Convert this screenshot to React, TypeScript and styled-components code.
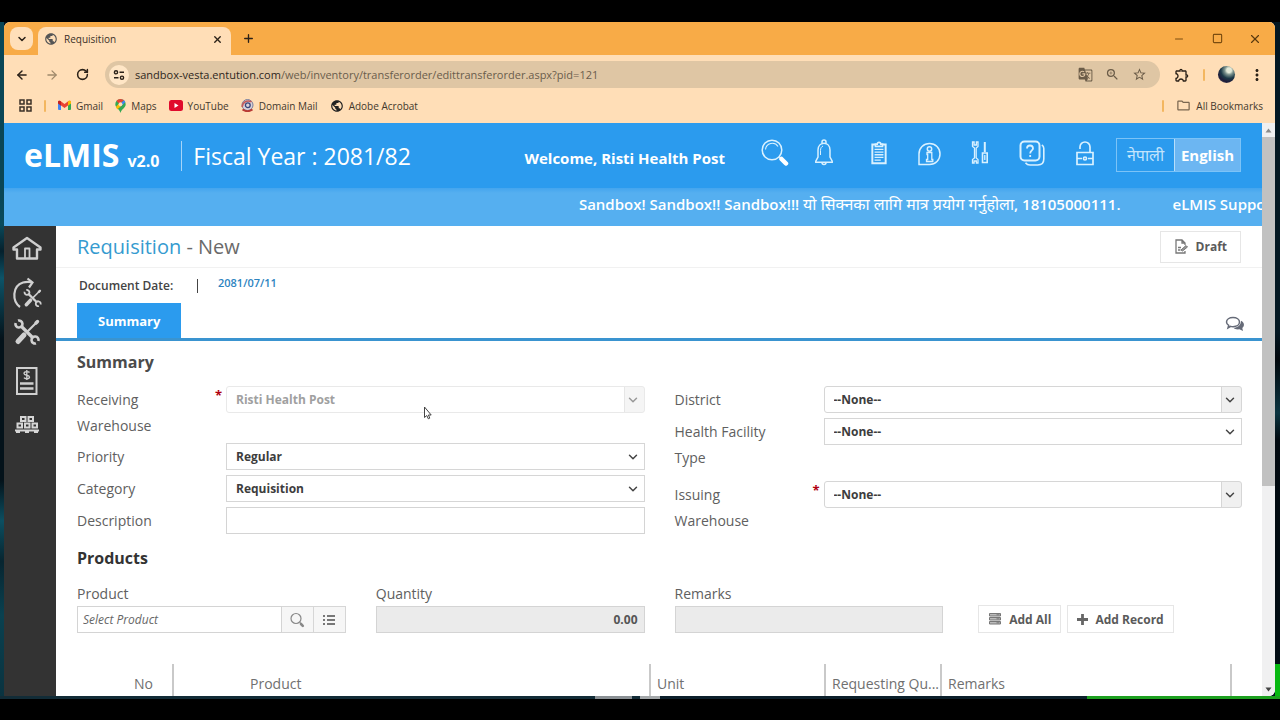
import React from 'react';
import styled, { createGlobalStyle, css } from 'styled-components';
import { ArrowLeft, ArrowRight, ChevronDown, Minus, Plus, RotateCw, Square, X } from 'lucide-react';
import { MdGTranslate, MdMoreVert, MdOutlineExtension, MdOutlineFolder, MdPublic, MdStarBorder, MdZoomIn } from 'react-icons/md';

const sans = `'Open Sans', 'Noto Sans', sans-serif`;
const blue = '#2b9bee';

const GlobalStyle = createGlobalStyle`
  *, *::before, *::after { box-sizing: border-box; }
  body { margin: 0; background: #000; font-family: ${sans}; }
  button, input, select { font-family: inherit; margin: 0; }
  button { cursor: pointer; }
  h1, h2, ul { margin: 0; padding: 0; }
  svg { display: block; flex: none; }
`;

/* ---------- desktop and window ---------- */

const Screen = styled.div`
  height: 100vh;
  display: flex;
  flex-direction: column;
  padding: 22px 0 21px;
  background: #000;
  overflow: hidden;
`;

const Desktop = styled.div`
  flex: 1;
  min-height: 0;
  display: grid;
  grid-template-columns: 4px minmax(0, 1fr) 5px;
  background: #04141d;
`;

const LeftWallpaper = styled.div`
  background: linear-gradient(#0a4656 0 26%, #0a4a5c 30%, #05202c 34%, #0d5468 38%, #04121a 47%, #04121a 68%, #0c4f61 74%, #072530 80%, #0a4150 88%, #0a3340);
`;

const RightWallpaper = styled.div`
  background: linear-gradient(#031722 0 46%, #01070c 50%, #0b3440 58%, #020a10 62%, #020d14 95.3%, #08b812 95.3%);
`;

const Window = styled.div`
  min-width: 0;
  min-height: 0;
  display: flex;
  flex-direction: column;
  border-radius: 6px 6px 6px 0;
  overflow: hidden;
  background: #fff;
`;

const Taskbar = styled.div`
  flex: none;
  height: 3px;
  display: grid;
  grid-template-columns: 595fr 37fr 8fr 20fr 427fr 193fr;
  background: #122c37;
`;

const TaskPart = styled.span<{ $color: string }>`
  background: ${p => p.$color};
`;

/* ---------- browser chrome ---------- */

const TabStrip = styled.div`
  flex: none;
  height: 33px;
  display: flex;
  align-items: flex-end;
  padding-left: 6px;
  background: #f8ab47;
`;

const PlainButton = styled.button<{ $color?: string }>`
  display: flex;
  align-items: center;
  justify-content: center;
  padding: 0;
  border: 0;
  background: none;
  color: ${p => p.$color ?? '#2b2118'};
`;

const TabSearch = styled(PlainButton)`
  width: 23px;
  height: 23px;
  margin-bottom: 5px;
  border-radius: 8px;
  background: #ffdfb9;
`;

const BrowserTab = styled.div`
  width: 193px;
  height: 28px;
  display: flex;
  align-items: center;
  gap: 6px;
  margin-left: 5px;
  padding: 0 8px 4px 6px;
  border-radius: 8px 8px 0 0;
  background: #ffdeb7;
  color: #3b3027;
  font-size: 10px;
`;

const TabTitle = styled.span`
  flex: 1;
`;

const NewTab = styled(PlainButton)`
  width: 34px;
  height: 33px;
`;

const WindowButtons = styled.div`
  display: flex;
  margin-left: auto;
  padding-right: 1px;
`;

const WindowButton = styled(PlainButton)`
  width: 38px;
  height: 33px;
`;

const Toolbar = styled.div`
  flex: none;
  height: 39px;
  display: flex;
  align-items: center;
  padding: 0 9px 0 3px;
  background: #ffdeb7;
`;

const ToolButton = styled(PlainButton)`
  width: 30px;
  height: 28px;
`;

const Omnibox = styled.div`
  flex: 1;
  min-width: 0;
  height: 27px;
  display: flex;
  align-items: center;
  gap: 12px;
  margin: 0 7px 0 8px;
  padding: 0 13px 0 4px;
  border-radius: 14px;
  background: #dfc6a4;
`;

const SiteInfo = styled(PlainButton)`
  width: 20px;
  height: 20px;
  border-radius: 50%;
  background: #ffe6c6;
`;

const Url = styled.span`
  flex: 1;
  margin-left: -6px;
  overflow: hidden;
  white-space: nowrap;
  color: #6a5d4c;
  font-size: 11px;
`;

const Host = styled.span`
  color: #2e261d;
`;

const Bar = styled.span`
  width: 2px;
  height: 12px;
  border-radius: 1px;
  background: #f3b65f;
`;

const ToolSep = styled(Bar)`
  margin-left: 6px;
`;

const Avatar = styled.span`
  width: 17px;
  height: 17px;
  margin: 0 13px;
  border-radius: 50%;
  background: radial-gradient(circle at 65% 25%, #e3e9d8 0 14%, #7f958f 26%, #1d3a48 48%, #1f1b3a 70%, #7d8c76);
`;

const Bookmarks = styled.nav`
  flex: none;
  height: 29px;
  display: flex;
  align-items: center;
  padding: 0 12px 6px 15px;
  background: #ffdeb7;
`;

const BookmarkSep = styled(Bar)`
  margin: 0 12px;
`;

const Bookmark = styled.a`
  display: flex;
  align-items: center;
  gap: 5px;
  margin-right: 12px;
  color: #44382c;
  font-size: 10px;
  text-decoration: none;
  white-space: nowrap;
  &:last-child { margin-right: 0; }
`;

const Push = styled.span`
  flex: 1;
`;

/* ---------- page frame ---------- */

const Viewport = styled.div`
  flex: 1;
  min-height: 0;
  display: grid;
  grid-template-columns: minmax(0, 1fr) 13px;
`;

const Page = styled.div`
  min-height: 0;
  overflow: hidden;
  display: flex;
  flex-direction: column;
`;

const Scrollbar = styled.div`
  display: flex;
  flex-direction: column;
  align-items: stretch;
  background: #f0f0f1;
`;

const ScrollArrow = styled(PlainButton)`
  height: 14px;
`;

const Thumb = styled.div`
  flex: 350;
  background: #c1c1c1;
`;

const ThumbRest = styled.div`
  flex: 196;
`;

const Header = styled.header`
  flex: none;
  height: 65px;
  display: flex;
  align-items: center;
  padding: 0 21px 0 20px;
  background: ${blue};
  color: #fff;
`;

const Logo = styled.div`
  display: flex;
  align-items: baseline;
  gap: 8px;
  padding-top: 4px;
  font-size: 32px;
  line-height: 40px;
  font-weight: 700;
`;

const Version = styled.span`
  font-size: 16px;
`;

const Fiscal = styled.div`
  margin-left: 22px;
  padding-left: 11px;
  border-left: 1px solid #a5d4f8;
  font-size: 23px;
  line-height: 30px;
  white-space: nowrap;
`;

const Welcome = styled.div`
  margin-left: auto;
  padding-top: 5px;
  font-size: 15px;
  font-weight: 700;
  white-space: nowrap;
`;

const HeaderGroup = styled.div<{ $gap: number; $before: number }>`
  display: flex;
  align-items: center;
  gap: ${p => p.$gap}px;
  margin-left: ${p => p.$before}px;
  padding-bottom: 5px;
`;

const Language = styled.div`
  display: grid;
  grid-template-columns: 57px 66px;
  margin-left: 21px;
  margin-bottom: 2px;
  border: 1px solid #7cc3f7;
`;

const LangButton = styled.button<{ $active?: boolean }>`
  height: 32px;
  padding: 0;
  border: 0;
  background: none;
  color: #c3e4fc;
  font-size: 16px;
  ${p => p.$active && css`
    border-left: 1px solid #b7defb;
    background: #6cb6f2;
    color: #fff;
    font-size: 15px;
    font-weight: 700;
  `}
`;

const Ticker = styled.div`
  flex: none;
  height: 38px;
  display: flex;
  align-items: center;
  gap: 52px;
  padding: 0 0 6px 45.7%;
  overflow: hidden;
  background: linear-gradient(#44a5ee, #55aff0 5px);
  color: #fff;
  font-size: 15px;
  line-height: 22px;
  font-weight: 600;
  white-space: nowrap;
`;

const Notice = styled.span`
  font-size: 16px;
  font-weight: 400;
`;

const Body = styled.div`
  flex: 1;
  min-height: 0;
  display: grid;
  grid-template-columns: 52px minmax(0, 1fr);
`;

const Sidebar = styled.nav`
  display: flex;
  flex-direction: column;
  align-items: center;
  padding-right: 7px;
  background: #333;
`;

const SideButton = styled(PlainButton)`
  width: 45px;
  height: 44px;
`;

const Main = styled.main`
  min-width: 0;
  background: #fff;
  color: #555;
`;

/* ---------- title and tabs ---------- */

const TitleRow = styled.div`
  display: flex;
  align-items: center;
  justify-content: space-between;
  height: 42px;
  padding: 0 21px;
  border-bottom: 1px solid #f1f1f1;
`;

const Title = styled.h1`
  color: #6a6a6a;
  font-size: 20px;
  font-weight: 400;
`;

const TitleName = styled.span`
  color: #359bd0;
`;

const OutlineButton = styled.button<{ $tall?: boolean }>`
  display: flex;
  align-items: center;
  gap: 7px;
  height: ${p => (p.$tall ? 32 : 28)}px;
  padding: 0 ${p => (p.$tall ? 13 : 9)}px;
  border: 1px solid #e6e6e6;
  background: #fff;
  color: #5a5a5a;
  font-size: 12px;
  font-weight: 700;
  white-space: nowrap;
`;

const DateRow = styled.div`
  display: flex;
  align-items: center;
  height: 35px;
  padding: 0 23px;
  color: #444;
  font-size: 12px;
`;

const DateLabel = styled.span`
  width: 118px;
  font-weight: 600;
`;

const DateValue = styled.a`
  margin-left: 20px;
  padding-bottom: 6px;
  color: #2d84bf;
  font-size: 11px;
  font-weight: 600;
  text-decoration: none;
`;

const DateBar = styled.span`
  width: 1px;
  height: 14px;
  background: #444;
`;

const Tabs = styled.div`
  display: flex;
  align-items: center;
  justify-content: space-between;
  padding: 0 17px 0 21px;
  border-bottom: 3px solid #3a94d0;
`;

const PageTab = styled.button`
  height: 35px;
  padding: 0 21px;
  border: 0;
  background: ${blue};
  color: #fff;
  font-size: 13px;
  font-weight: 700;
`;

const CommentsButton = styled(PlainButton)`
  padding-top: 6px;
`;

/* ---------- form ---------- */

const Section = styled.section`
  padding: 0 20px 0 21px;
`;

const SectionTitle = styled.h2<{ $dark?: boolean }>`
  padding: ${p => (p.$dark ? 13 : 10)}px 0 13px;
  color: ${p => (p.$dark ? '#333' : '#4b4b4b')};
  font-size: 16px;
  line-height: 22px;
  font-weight: 700;
`;

const FormGrid = styled.form`
  display: grid;
  grid-template-columns: 1fr 1fr;
  gap: 30px;
`;

const Column = styled.div`
  display: flex;
  flex-direction: column;
  gap: 5px;
`;

const Row = styled.div<{ $loose?: boolean }>`
  display: grid;
  grid-template-columns: 149px minmax(0, 1fr);
  align-items: start;
  padding-bottom: ${p => (p.$loose ? 6 : 0)}px;
`;

const LabelCell = styled.div`
  display: flex;
  justify-content: space-between;
  padding-right: 4px;
`;

const Label = styled.label`
  max-width: 110px;
  color: #606060;
  font-size: 14px;
  line-height: 26px;
  padding-top: 1px;
  margin-bottom: -1px;
`;

const Required = styled.span`
  color: #b00010;
  font-size: 13px;
  line-height: 18px;
  font-weight: 700;
`;

const Field = styled.div`
  position: relative;
  display: grid;
  align-items: center;
  height: 27px;
  > * { grid-area: 1 / 1; }
`;

const Select = styled.select<{ $combo?: boolean }>`
  width: 100%;
  height: 27px;
  padding: 0 30px 0 9px;
  appearance: none;
  border: 1px solid #d6d6d6;
  border-radius: ${p => (p.$combo ? 3 : 0)}px;
  background: ${p => (p.$combo ? 'linear-gradient(to left, #f0f0f0 19px, #d6d6d6 19px, #d6d6d6 20px, #fff 20px)' : '#fff')};
  color: #3d3d3d;
  font-size: 12px;
  font-weight: 700;
  &:disabled {
    opacity: 1;
    border-color: #e9e9e9;
    color: #a0a0a0;
    background: linear-gradient(to left, #f5f5f5 19px, #e6e6e6 19px, #e6e6e6 20px, #fff 20px);
  }
`;

const Caret = styled.span<{ $muted?: boolean }>`
  justify-self: end;
  padding-right: 5px;
  color: ${p => (p.$muted ? '#999' : '#444')};
  pointer-events: none;
`;

const TextInput = styled.input<{ $grey?: boolean }>`
  width: 100%;
  height: 27px;
  padding: 0 6px 0 5px;
  border: 1px solid #d4d4d4;
  border-radius: 0;
  background: ${p => (p.$grey ? '#ebebeb' : '#fff')};
  color: #555;
  font-size: 12px;
  text-align: ${p => (p.$grey ? 'right' : 'left')};
  font-weight: ${p => (p.$grey ? 700 : 400)};
  &::placeholder { color: #666; font-style: italic; opacity: 1; }
`;

const Pointer = styled.svg`
  position: absolute;
  left: 47%;
  top: 20px;
`;

const ProductGrid = styled.form`
  display: grid;
  grid-template-columns: repeat(4, minmax(0, 1fr));
  column-gap: 30px;
  align-items: end;
`;

const Stack = styled.div`
  display: flex;
  flex-direction: column;
`;

const StackLabel = styled.label`
  color: #606060;
  font-size: 14px;
  line-height: 24px;
`;

const InputGroup = styled.div`
  display: grid;
  grid-template-columns: minmax(0, 1fr) 32px 32px;
  height: 27px;
`;

const AddonButton = styled(PlainButton)`
  border: 1px solid #d6d6d6;
  border-left: 0;
  background: #f6f6f6;
`;

const Actions = styled.div`
  display: flex;
  gap: 6px;
  padding-left: 5px;
`;

const Table = styled.table`
  width: 100%;
  margin-top: 31px;
  table-layout: fixed;
  border-collapse: collapse;
`;

const Th = styled.th<{ $width?: number; $indent?: number; $right?: boolean }>`
  width: ${p => (p.$width ? `${p.$width}px` : 'auto')};
  height: 39px;
  padding: 0 ${p => (p.$right ? 19 : 0)}px 0 ${p => p.$indent ?? 6}px;
  overflow: hidden;
  border-right: 2px solid #c9c9c9;
  color: #707070;
  font-size: 14px;
  font-weight: 400;
  text-align: ${p => (p.$right ? 'right' : 'left')};
  white-space: nowrap;
`;

const EdgeCell = styled.td`
  width: 11px;
  padding: 0;
`;

/* ---------- drawings ---------- */

const SiteInfoIcon = () => (
  <svg width="12" height="12" viewBox="0 0 12 12" fill="none" stroke="#2b2118" strokeWidth="1.4">
    <circle cx="3" cy="3.3" r="1.6" /><path d="M6.5 3.3H11M1 8.7h4.5" /><circle cx="9" cy="8.7" r="1.6" />
  </svg>
);

const AppsIcon = () => (
  <svg width="13" height="13" viewBox="0 0 13 13" fill="none" stroke="#3b3027" strokeWidth="1.5">
    <path d="M1 1h4v4H1zM8 1h4v4H8zM1 8h4v4H1zM8 8h4v4H8z" />
  </svg>
);

const GmailIcon = () => (
  <svg width="13" height="11" viewBox="0 0 13 11">
    <path fill="#4285f4" d="M0 2v7a1 1 0 0 0 1 1h2V4z" />
    <path fill="#34a853" d="M10 4v6h2a1 1 0 0 0 1-1V2z" />
    <path fill="#ea4335" d="M0 2.2C0 .6 1.6.3 2.5 1l4 3.1 4-3.1c.9-.7 2.5-.4 2.5 1.200L10 5v.6L6.500 8 3 5.400V4.500z" />
    <path fill="#c5221f" d="M0 2v1.500l3 2.200V1.400C1.800.3 0 .6 0 2z" />
    <path fill="#fbbc04" d="M10 1.400v4.300l3-2.200V2c0-1.400-1.800-1.700-3-.6z" />
  </svg>
);

const MapsIcon = () => (
  <svg width="11" height="14" viewBox="0 0 11 14">
    <path fill="#34a853" d="M5.500 0A5.200 5.200 0 0 0 .3 5.200C.3 9 4.300 9.500 5.500 14c1.200-4.500 5.200-5 5.200-8.800A5.200 5.200 0 0 0 5.500 0z" />
    <path fill="#4285f4" d="M5.500 0c2.200 0 4 1.200 4.800 3L5.500 8 3.600 6.400 9 .9z" />
    <path fill="#ea4335" d="M5.500 0 9 1 4.500 5 1.500 2C2.300.9 3.800 0 5.500 0z" />
    <path fill="#fbbc04" d="M1 7.800 4.500 4l2.300 2.400-4.600 4C1.700 9.500 1.300 8.800 1 7.800z" />
    <circle cx="5.500" cy="5.200" r="1.900" fill="#ffdeb7" />
  </svg>
);

const YouTubeIcon = () => (
  <svg width="14" height="11" viewBox="0 0 14 11">
    <rect width="14" height="11" rx="2.500" fill="#e00b2d" /><path d="M5.500 3v5l4-2.500z" fill="#fff" />
  </svg>
);

const MailIcon = () => (
  <svg width="13" height="13" viewBox="0 0 13 13" fill="none">
    <circle cx="6.500" cy="6" r="5.500" fill="#d9d0d8" stroke="#7a7f9c" />
    <path d="M1.200 8C1.500 3 6 .8 10.500 2.800" stroke="#c45a5a" strokeWidth="1.600" />
    <circle cx="6.800" cy="6.200" r="2.400" stroke="#39457a" strokeWidth="1.300" />
    <path d="M1.500 10.500c3 2 7 2 10 0" stroke="#b93a34" strokeWidth="2" />
  </svg>
);

const line = { fill: 'none', stroke: '#d9f1ff', strokeWidth: 1.5 };

const SearchIcon = () => (
  <svg width="28" height="28" viewBox="0 0 28 28" {...line}>
    <circle cx="11" cy="11" r="9.800" /><path d="M4.500 10.500A6.800 6.800 0 0 1 17 7.500" strokeWidth="1.100" />
    <path d="m18 17.500 2.500 2.500" /><path d="m20.500 20 4.500 4.500" stroke="#fff" strokeWidth="4.500" strokeLinecap="round" />
  </svg>
);

const BellIcon = () => (
  <svg width="18" height="28" viewBox="0 0 18 28" {...line}>
    <path d="M7 4.500V3a2 2 0 0 1 4 0v1.500M3 18v-7c0-9 12-9 12 0v7l2.200 4.200v1H.8v-1zM7 23.500a2 2 0 0 0 4 0" />
    <path d="M5.500 16v-4.500c0-2.500 1-3.800 2.500-4.500" strokeWidth="1" />
  </svg>
);

const ClipboardIcon = () => (
  <svg width="16" height="26" viewBox="0 0 18 28" {...line}>
    <path d="M5 4.500H1.500v21h15v-21H13" strokeWidth="2.200" /><path d="M5 6.500V4h2a2 2 0 0 1 4 0h2v2.500z" strokeWidth="1.800" />
    <path d="M4 10h10M4 13h10M4 16h10M4 19h10M4 22h7" strokeWidth="1.500" />
  </svg>
);

const InfoIcon = () => (
  <svg width="24" height="26" viewBox="0 0 24 26" {...line}>
    <path d="M2 24.500V14C2 8 6.500 3.500 12.500 3.500S23 8 23 14s-4.500 10.500-10.500 10.500z" />
    <circle cx="12.500" cy="9" r="2.200" /><path d="M10 12.500h4.800v7h1v2H9.500v-2h1.200v-5H10z" strokeWidth="1.300" />
  </svg>
);

const ToolsIcon = () => (
  <svg width="18" height="26" viewBox="0 0 18 26" {...line} strokeWidth={1.3}>
    <path d="M1.500 2v4.500l2 1.500v10l-2 1.500V23h1.600v-2h2.300v2H7v-3.500L5.200 18V8L7 6.500V2H5.400v3H3.100V2z" />
    <path d="M13.800 2v10" strokeWidth="2" /><path d="M11.500 13h4.700v9.500h-4.700z" strokeWidth="1.600" /><path d="M13.800 15v5" />
  </svg>
);

const HelpIcon = () => (
  <svg width="26" height="28" viewBox="0 0 26 28" {...line} strokeWidth={1.6}>
    <rect x="1.500" y="2.500" width="19" height="19" rx="4" strokeWidth="2" />
    <path d="M22.800 6c1.500.8 2 2 2 3.500V20c0 4-2 6-6 6H11c-2 0-3.500-.8-4.500-2.200" />
    <path d="M8 9.500c0-4 6-4 6 0 0 2-2.800 2-2.800 5M11.200 16v2" strokeWidth="1.800" />
  </svg>
);

const LockIcon = () => (
  <svg width="20" height="28" viewBox="0 0 20 28" {...line} strokeWidth={1.7}>
    <path d="M5 10V8a5 5 0 0 1 10 0v5.500M2 13.500h16v12H2z" /><path d="M2 19.500h5M13 19.500h5" /><circle cx="10" cy="19.500" r="1.500" />
  </svg>
);

const HomeIcon = () => (
  <svg width="32" height="44" viewBox="0 0 32 44" fill="none" stroke="#cfcfcf" strokeWidth="2.400" strokeLinejoin="round">
    <path d="M2.500 21.500 16 12l13.500 9.500v2H26v9H6v-9H2.500z" /><path d="M14 32V22.500h4.500V32" strokeWidth="1.800" />
  </svg>
);

const toolsCross = (
  <>
    <path d="M7 7l12 12" strokeWidth="3.200" />
    <path d="M1.600 4A3.500 3.500 0 1 0 4 1.600M24.400 22A3.500 3.500 0 1 0 22 24.400" strokeWidth="2.600" />
    <path d="M23.500 2.500 13 13" strokeWidth="2.200" /><path d="m22 4 1.500-1.500" strokeWidth="3.400" strokeLinecap="round" />
    <path d="m10 16-6 6.500" strokeWidth="5" strokeLinecap="round" />
  </>
);

const CycleIcon = () => (
  <svg width="32" height="44" viewBox="0 0 32 44" fill="none" stroke="#d0d0d0" strokeWidth="2.200">
    <path d="M9 37C1 31 1 16 12 12.500c3-.9 6-.8 9-.3" /><path d="m16.500 8.500 5 4-3.500 5" />
    <g transform="translate(12.500 19) scale(.7)">{toolsCross}</g>
  </svg>
);

const RepairIcon = () => (
  <svg width="32" height="44" viewBox="0 0 32 44" fill="none" stroke="#d0d0d0">
    <g transform="translate(3 5)">{toolsCross}</g>
  </svg>
);

const InvoiceIcon = () => (
  <svg width="32" height="44" viewBox="0 0 32 44" fill="none" stroke="#d0d0d0" strokeWidth="2">
    <path d="M6 10h19.500v26H6z" /><path d="M9 25.500h13.500M9 30.500h13.500" strokeWidth="2.400" />
    <path d="M18.500 14.500c-1-1.300-5.500-1.200-5.500 1 0 2.300 5.500 1.200 5.500 3.500 0 2.200-4.500 2.200-5.500.7M15.800 12v10" strokeWidth="1.300" />
  </svg>
);

const PalletIcon = () => (
  <svg width="32" height="44" viewBox="0 0 32 44" fill="none" stroke="#d6d6d6" strokeWidth="2">
    <path d="M10 15h4.500v4H10zM17.500 15H22v4h-4.500zM6.500 21.500H11v4H6.500zM14 21.500h4.500v4H14zM21.500 21.500H26v4h-4.500z" />
    <path d="M4 28.500h24" /><path d="M5 30h4M14 30h4M23 30h4" />
  </svg>
);

const DraftIcon = () => (
  <svg width="15" height="15" viewBox="0 0 15 15" fill="none" stroke="#777" strokeWidth="1.300">
    <path d="M11 12v2H2V1h6l3 3v2M8 1v3h3M4 8.500h3M4 11h2.500" /><path d="m7 11 5-4.500 1.500 1.500-5 4z" fill="#999" strokeWidth="1" />
  </svg>
);

const ChatIcon = () => (
  <svg width="20" height="16" viewBox="0 0 20 16">
    <path d="M8 1.500c3.700 0 6.500 2 6.500 4.600S11.700 10.700 8 10.700c-.8 0-1.600-.1-2.300-.3L3 12l.7-2.600C2.300 8.600 1.500 7.400 1.500 6.100 1.500 3.500 4.300 1.500 8 1.500z" fill="none" stroke="#666b78" strokeWidth="1.500" />
    <path d="M16 4.800c4 2 3.500 5.700 1.300 7.200L18 15l-3.500-1.700c-3 .3-5-.3-6-1.500 4 0 7.500-2.500 7.500-7z" fill="#666b78" />
  </svg>
);

const FindIcon = () => (
  <svg width="16" height="16" viewBox="0 0 16 16" fill="none" stroke="#888" strokeWidth="1.200">
    <circle cx="7" cy="6.500" r="5" /><path d="m10.800 10.500 1.200 1.200" /><path d="m12 12 1.800 1.800" strokeWidth="2.600" strokeLinecap="round" />
  </svg>
);

const ListIcon = () => (
  <svg width="14" height="12" viewBox="0 0 14 12" stroke="#777" strokeWidth="2">
    <path d="M1 2h2M5 2h8M1 6h2M5 6h8M1 10h2M5 10h8" />
  </svg>
);

const StackIcon = () => (
  <svg width="14" height="12" viewBox="0 0 14 12" fill="none" stroke="#777" strokeWidth="1">
    <path d="M1.500.5h11v2.500h-11zM1.500 4.500h11V7h-11zM1.500 8.500h11V11h-11z" fill="#bbb" /><path d="M8.500 1.800h3M8.500 5.800h3M8.500 9.800h3" />
  </svg>
);

const PlusIcon = () => (
  <svg width="11" height="11" viewBox="0 0 11 11" stroke="#666" strokeWidth="2.800"><path d="M5.500 0v11M0 5.500h11" /></svg>
);

const Triangle = ({ down }: { down?: boolean }) => (
  <svg width="7" height="5" viewBox="0 0 7 5" fill={down ? '#444' : '#8a8a8a'}><path d={down ? 'M.5.5h6l-3 4z' : 'M.5 4.500h6l-3-4z'} /></svg>
);

/* ---------- composed parts ---------- */

type PickerProps = { id: string; label: string; value: string; required?: boolean; combo?: boolean; disabled?: boolean; loose?: boolean; children?: React.ReactNode };

const Picker = ({ id, label, value, required, combo, disabled, loose, children }: PickerProps) => (
  <Row $loose={loose}>
    <LabelCell>
      <Label htmlFor={id}>{label}</Label>
      {required && <Required>*</Required>}
    </LabelCell>
    <Field>
      <Select id={id} $combo={combo} disabled={disabled} defaultValue={value}>
        <option>{value}</option>
      </Select>
      <Caret $muted={disabled}><ChevronDown size={14} strokeWidth={2.5} /></Caret>
      {children}
    </Field>
  </Row>
);

const Chrome = () => (
  <>
    <TabStrip>
      <TabSearch aria-label="Search tabs"><ChevronDown size={12} strokeWidth={3} /></TabSearch>
      <BrowserTab>
        <MdPublic size={14} color="#555" />
        <TabTitle>Requisition</TabTitle>
        <PlainButton aria-label="Close tab"><X size={11} strokeWidth={3} /></PlainButton>
      </BrowserTab>
      <NewTab aria-label="New tab"><Plus size={13} strokeWidth={2.5} /></NewTab>
      <WindowButtons>
        <WindowButton aria-label="Minimize" $color="#7a4c10"><Minus size={12} /></WindowButton>
        <WindowButton aria-label="Maximize" $color="#7a4c10"><Square size={11} strokeWidth={2.5} /></WindowButton>
        <WindowButton aria-label="Close" $color="#5a3a10"><X size={14} strokeWidth={2} /></WindowButton>
      </WindowButtons>
    </TabStrip>
    <Toolbar>
      <ToolButton aria-label="Back"><ArrowLeft size={14} strokeWidth={2.5} /></ToolButton>
      <ToolButton aria-label="Forward" $color="#a08a6c"><ArrowRight size={14} strokeWidth={2.2} /></ToolButton>
      <ToolButton aria-label="Reload"><RotateCw size={13} strokeWidth={2.8} /></ToolButton>
      <Omnibox>
        <SiteInfo aria-label="Site information"><SiteInfoIcon /></SiteInfo>
        <Url><Host>sandbox-vesta.entution.com</Host>/web/inventory/transferorder/edittransferorder.aspx?pid=121</Url>
        <PlainButton aria-label="Translate" $color="#6b5c48"><MdGTranslate size={15} /></PlainButton>
        <PlainButton aria-label="Zoom" $color="#6b5c48"><MdZoomIn size={15} /></PlainButton>
        <PlainButton aria-label="Bookmark" $color="#6b5c48"><MdStarBorder size={15} /></PlainButton>
      </Omnibox>
      <ToolButton aria-label="Extensions"><MdOutlineExtension size={16} /></ToolButton>
      <ToolSep />
      <Avatar />
      <PlainButton aria-label="Menu"><MdMoreVert size={18} /></PlainButton>
    </Toolbar>
    <Bookmarks>
      <AppsIcon />
      <BookmarkSep />
      <Bookmark href="#"><GmailIcon />Gmail</Bookmark>
      <Bookmark href="#"><MapsIcon />Maps</Bookmark>
      <Bookmark href="#"><YouTubeIcon />YouTube</Bookmark>
      <Bookmark href="#"><MailIcon />Domain Mail</Bookmark>
      <Bookmark href="#"><MdPublic size={14} color="#222" />Adobe Acrobat</Bookmark>
      <Push />
      <BookmarkSep />
      <Bookmark href="#"><MdOutlineFolder size={15} color="#7a6750" />All Bookmarks</Bookmark>
    </Bookmarks>
  </>
);

export default function App() {
  return (
    <Screen>
      <GlobalStyle />
      <Desktop>
        <LeftWallpaper />
        <Window>
          <Chrome />
          <Viewport>
            <Page>
              <Header>
                <Logo>eLMIS <Version>v2.0</Version></Logo>
                <Fiscal>Fiscal Year : 2081/82</Fiscal>
                <Welcome>Welcome, Risti Health Post</Welcome>
                <HeaderGroup $gap={26} $before={36}>
                  <PlainButton aria-label="Search"><SearchIcon /></PlainButton>
                  <PlainButton aria-label="Notifications"><BellIcon /></PlainButton>
                </HeaderGroup>
                <HeaderGroup $gap={30} $before={38}>
                  <PlainButton aria-label="Reports"><ClipboardIcon /></PlainButton>
                  <PlainButton aria-label="Information"><InfoIcon /></PlainButton>
                  <PlainButton aria-label="Settings"><ToolsIcon /></PlainButton>
                  <PlainButton aria-label="Help"><HelpIcon /></PlainButton>
                  <PlainButton aria-label="Log out"><LockIcon /></PlainButton>
                </HeaderGroup>
                <Language>
                  <LangButton lang="ne">नेपाली</LangButton>
                  <LangButton $active>English</LangButton>
                </Language>
              </Header>
              <Ticker>
                <span>Sandbox! Sandbox!! Sandbox!!! <Notice lang="ne">यो सिक्नका लागि मात्र प्रयोग गर्नुहोला</Notice>, 18105000111.</span>
                <span>eLMIS Support</span>
              </Ticker>
              <Body>
                <Sidebar>
                  <SideButton aria-label="Home"><HomeIcon /></SideButton>
                  <SideButton aria-label="Process"><CycleIcon /></SideButton>
                  <SideButton aria-label="Maintenance"><RepairIcon /></SideButton>
                  <SideButton aria-label="Billing"><InvoiceIcon /></SideButton>
                  <SideButton aria-label="Inventory"><PalletIcon /></SideButton>
                </Sidebar>
                <Main>
                  <TitleRow>
                    <Title><TitleName>Requisition</TitleName> - New</Title>
                    <OutlineButton $tall><DraftIcon />Draft</OutlineButton>
                  </TitleRow>
                  <DateRow>
                    <DateLabel>Document Date:</DateLabel>
                    <DateBar />
                    <DateValue href="#">2081/07/11</DateValue>
                  </DateRow>
                  <Tabs>
                    <PageTab>Summary</PageTab>
                    <CommentsButton aria-label="Comments"><ChatIcon /></CommentsButton>
                  </Tabs>
                  <Section>
                    <SectionTitle>Summary</SectionTitle>
                    <FormGrid>
                      <Column>
                        <Picker id="receiving" label="Receiving Warehouse" value="Risti Health Post" required combo disabled>
                          <Pointer width="10" height="14" viewBox="0 0 10 14">
                            <path d="M1.500 1v10.500l2.300-2 1.500 3.300 1.500-.7-1.400-3.100h2.800z" fill="#fff" stroke="#444" strokeWidth="1" />
                          </Pointer>
                        </Picker>
                        <Picker id="priority" label="Priority" value="Regular" />
                        <Picker id="category" label="Category" value="Requisition" />
                        <Row>
                          <LabelCell><Label htmlFor="description">Description</Label></LabelCell>
                          <TextInput id="description" />
                        </Row>
                      </Column>
                      <Column>
                        <Picker id="district" label="District" value="--None--" combo />
                        <Picker id="facility" label="Health Facility Type" value="--None--" loose />
                        <Picker id="issuing" label="Issuing Warehouse" value="--None--" required combo />
                      </Column>
                    </FormGrid>
                  </Section>
                  <Section>
                    <SectionTitle $dark>Products</SectionTitle>
                    <ProductGrid>
                      <Stack>
                        <StackLabel htmlFor="product">Product</StackLabel>
                        <InputGroup>
                          <TextInput id="product" placeholder="Select Product" />
                          <AddonButton type="button" aria-label="Find product"><FindIcon /></AddonButton>
                          <AddonButton type="button" aria-label="List products"><ListIcon /></AddonButton>
                        </InputGroup>
                      </Stack>
                      <Stack>
                        <StackLabel htmlFor="quantity">Quantity</StackLabel>
                        <TextInput id="quantity" $grey defaultValue="0.00" />
                      </Stack>
                      <Stack>
                        <StackLabel htmlFor="remarks">Remarks</StackLabel>
                        <TextInput id="remarks" $grey />
                      </Stack>
                      <Actions>
                        <OutlineButton type="button"><StackIcon />Add All</OutlineButton>
                        <OutlineButton type="button"><PlusIcon />Add Record</OutlineButton>
                      </Actions>
                    </ProductGrid>
                    <Table>
                      <thead>
                        <tr>
                          <Th $width={96} $right>No</Th>
                          <Th $indent={76}>Product</Th>
                          <Th $width={175}>Unit</Th>
                          <Th $width={116}>Requesting Qu...</Th>
                          <Th $width={290}>Remarks</Th>
                          <EdgeCell />
                        </tr>
                      </thead>
                    </Table>
                  </Section>
                </Main>
              </Body>
            </Page>
            <Scrollbar>
              <ScrollArrow aria-label="Scroll up"><Triangle /></ScrollArrow>
              <Thumb />
              <ThumbRest />
              <ScrollArrow aria-label="Scroll down"><Triangle down /></ScrollArrow>
            </Scrollbar>
          </Viewport>
        </Window>
        <RightWallpaper />
      </Desktop>
      <Taskbar>
        <TaskPart $color="#122c37" />
        <TaskPart $color="#8a9094" />
        <TaskPart $color="#122c37" />
        <TaskPart $color="#a4a8aa" />
        <TaskPart $color="#0c202b" />
        <TaskPart $color="#1da01f" />
      </Taskbar>
    </Screen>
  );
}
